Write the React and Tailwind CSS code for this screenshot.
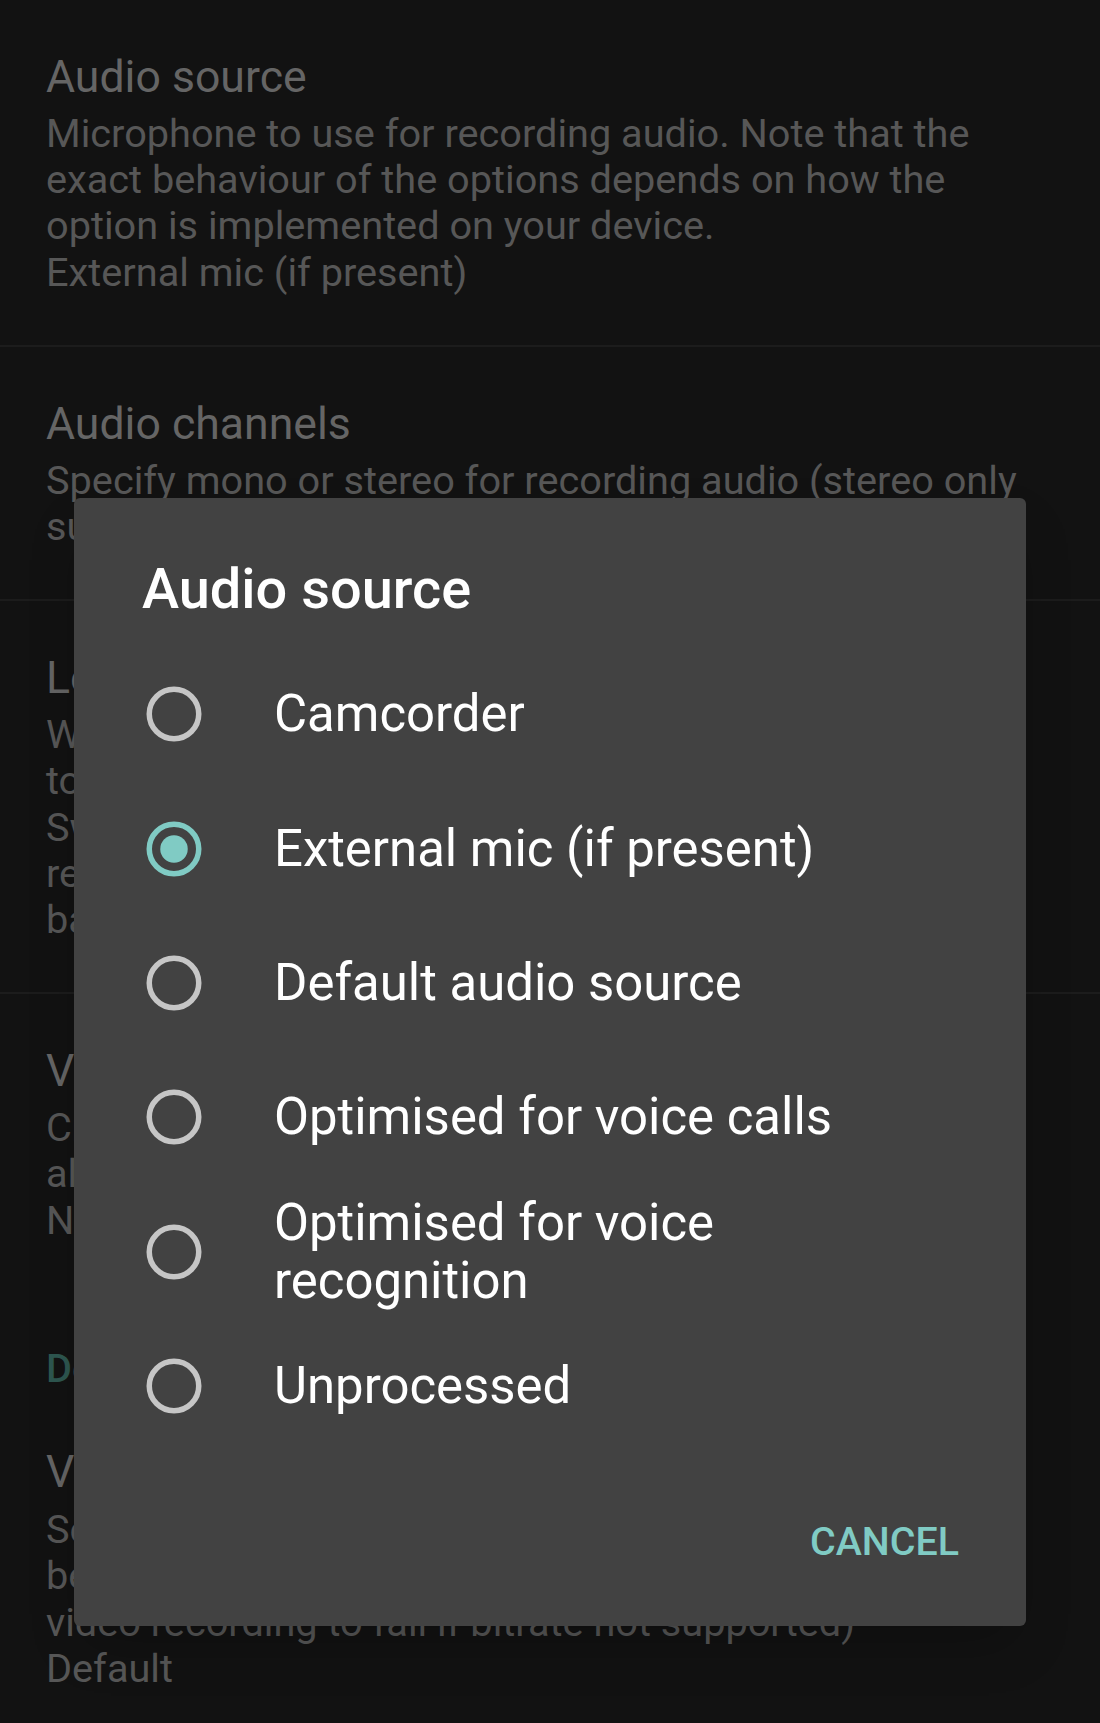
import React, { useState } from "react";

const prefs = [
  {
    title: "Audio source",
    lines: [
      "Microphone to use for recording audio. Note that the",
      "exact behaviour of the options depends on how the",
      "option is implemented on your device.",
      "External mic (if present)",
    ],
    divider: true,
  },
  {
    title: "Audio channels",
    lines: [
      "Specify mono or stereo for recording audio (stereo only",
      "supported on some devices)",
    ],
    divider: true,
  },
  {
    title: "Lock screen when recording video",
    lines: [
      "When recording video, lock the touch screen",
      "to prevent accidental touches.",
      "Swipe the screen to unlock. Note the",
      "recording will continue in the",
      "background",
    ],
    divider: true,
  },
  {
    title: "Video subtitles",
    lines: [
      "Create a subtitles file storing date and time,",
      "also GPS location if enabled",
      "No",
    ],
    divider: false,
  },
];

const options = [
  "Camcorder",
  "External mic (if present)",
  "Default audio source",
  "Optimised for voice calls",
  "Optimised for voice recognition",
  "Unprocessed",
];

function Pref(props) {
  return (
    <div
      className={
        "px-[46px] pt-[51px] pb-[49px] " +
        (props.divider ? "border-b-2 border-[#1c1c1c]" : "")
      }
    >
      <p className="text-[44.6px] leading-[52px] text-[#656565] whitespace-nowrap">
        {props.title}
      </p>
      <div className="mt-[8px] text-[39.7px] leading-[46.2px] text-[#575757]">
        {props.lines.map((l, i) => (
          <p key={i} className="whitespace-nowrap">
            {l}
          </p>
        ))}
      </div>
    </div>
  );
}

function Radio({ checked }) {
  return (
    <svg width="66" height="66" viewBox="0 0 24 24" className="shrink-0">
      <circle
        cx="12"
        cy="12"
        r="9"
        fill="none"
        stroke={checked ? "#80cbc4" : "#c6c6c6"}
        strokeWidth="2"
      />
      {checked && <circle cx="12" cy="12" r="5" fill="#80cbc4" />}
    </svg>
  );
}

export default function App() {
  const [selected, setSelected] = useState(1);

  return (
    <div className="relative h-[1723px] w-full overflow-hidden bg-[#121212] font-['Roboto',sans-serif]">
      {prefs.map((p, i) => (
        <Pref key={i} {...p} />
      ))}

      {/* category header */}
      <div className="px-[46px] pt-[53px]">
        <p className="text-[39.7px] leading-[46px] font-medium text-[#2e5750] whitespace-nowrap">
          Debugging options
        </p>
      </div>

      <div className="px-[46px] pt-[54px]">
        <p className="text-[44.6px] leading-[52px] text-[#656565] whitespace-nowrap">
          Video bitrate (approx.)
        </p>
        <div className="mt-[9px] text-[39.7px] leading-[46.5px] text-[#575757]">
          <p className="whitespace-nowrap">Select bitrate for video (higher values mean</p>
          <p className="whitespace-nowrap">better quality, but larger files; may cause</p>
          <p className="whitespace-nowrap">video recording to fail if bitrate not supported)</p>
          <p className="whitespace-nowrap">Default</p>
        </div>
      </div>

      {/* dialog */}
      <div className="absolute left-[74px] top-[498px] w-[952px] h-[1128px] rounded-[6px] bg-[#424242] shadow-2xl">
        <p className="pl-[68px] pt-[59px] text-[55.9px] leading-[65px] font-medium text-white">
          Audio source
        </p>
        <div className="mt-[25px]">
          {options.map((o, i) => (
            <div
              key={i}
              className="flex h-[134.4px] items-center pl-[67px] cursor-pointer"
              onClick={() => setSelected(i)}
            >
              <Radio checked={selected === i} />
              <span className="ml-[67px] w-[600px] text-[50.9px] leading-[58px] text-white">
                {o}
              </span>
            </div>
          ))}
        </div>
        <div className="mt-[66px] flex justify-end pr-[67px]">
          <span className="text-[39.4px] leading-[46px] font-medium text-[#80cbc4]">
            CANCEL
          </span>
        </div>
      </div>
    </div>
  );
}
